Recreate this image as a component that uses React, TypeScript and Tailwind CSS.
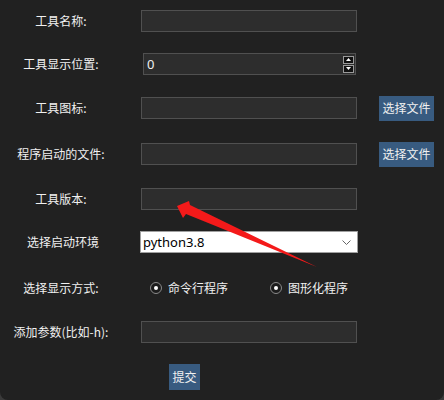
import React from "react";

const FONT = { fontFamily: '"Noto Sans CJK SC", "Noto Sans", sans-serif' };

function Label({ children }: { children: React.ReactNode }) {
  return <div className="w-[122px] shrink-0 text-center text-[12px] leading-none text-[#f0f0f0]">{children}</div>;
}

function TextBox() {
  return <div className="ml-[19px] h-[22px] w-[216px] border border-[#505050] bg-[#2d2d2d]" />;
}

function FileButton() {
  return (
    <button className="ml-[22px] h-[25px] w-[55px] bg-[#385b80] text-[12px] text-[#f0f0f0]">
      选择文件
    </button>
  );
}

function Radio({ label }: { label: string }) {
  return (
    <label className="flex items-center gap-[6px] text-[12px] text-[#f0f0f0]">
      <span className="flex h-[12px] w-[12px] items-center justify-center rounded-full border border-[#8a8a8a] bg-[#1c1c1c]">
        <span className="h-[4px] w-[4px] rounded-full bg-white" />
      </span>
      {label}
    </label>
  );
}

export default function App() {
  return (
    <div className="h-[400px] w-[444px] bg-[#3a3a3a]" style={FONT}>
      <div className="relative flex h-full w-full flex-col rounded-b-[8px] bg-[#212121] pt-[10px]">
        {/* 工具名称 */}
        <div className="flex h-[22px] items-center">
          <Label>工具名称:</Label>
          <TextBox />
        </div>

        {/* 显示位置 - spinbox */}
        <div className="mt-[21px] flex h-[22px] items-center">
          <Label>工具显示位置:</Label>
          <div className="ml-[21px] flex h-[22px] w-[213px] items-center justify-between border border-[#505050] bg-[#2d2d2d] pl-[3px] pr-[1px]">
            <span className="text-[13px] leading-none text-[#f0f0f0]" style={{ fontFamily: '"Noto Sans", sans-serif' }}>0</span>
            <div className="flex flex-col gap-[1px]">
              <div className="flex h-[8px] w-[11px] items-center justify-center border border-[#9a9a9a] bg-[#111]">
                <svg width="5" height="3" viewBox="0 0 5 3"><path d="M2.5 0L5 3H0z" fill="#fff" /></svg>
              </div>
              <div className="flex h-[8px] w-[11px] items-center justify-center border border-[#9a9a9a] bg-[#111]">
                <svg width="5" height="3" viewBox="0 0 5 3"><path d="M0 0h5L2.5 3z" fill="#fff" /></svg>
              </div>
            </div>
          </div>
        </div>

        {/* 图标 */}
        <div className="mt-[22px] flex h-[22px] items-center">
          <Label>工具图标:</Label>
          <TextBox />
          <FileButton />
        </div>

        {/* 启动文件 */}
        <div className="mt-[24px] flex h-[22px] items-center">
          <Label>程序启动的文件:</Label>
          <TextBox />
          <FileButton />
        </div>

        {/* 版本 */}
        <div className="mt-[23px] flex h-[22px] items-center">
          <Label>工具版本:</Label>
          <TextBox />
        </div>

        {/* 启动环境 */}
        <div className="mt-[21px] flex h-[22px] items-center">
          <div className="w-[126px] shrink-0 text-center text-[12px] leading-none text-[#f0f0f0]">选择启动环境</div>
          <div className="ml-[14px] flex h-[22px] w-[218px] items-center justify-between border border-[#a0a0a0] bg-white pl-[2px] pr-[6px]">
            <span className="text-[13px] leading-none text-black" style={{ fontFamily: '"Noto Sans", sans-serif' }}>python3.8</span>
            <svg width="9" height="5" viewBox="0 0 9 5"><path d="M0.5 0.5L4.5 4.5L8.5 0.5" fill="none" stroke="#666" strokeWidth="1" /></svg>
          </div>
        </div>

        {/* 显示方式 */}
        <div className="mt-[24px] flex h-[22px] items-center">
          <Label>选择显示方式:</Label>
          <div className="ml-[28px] flex items-center gap-[42px]">
            <Radio label="命令行程序" />
            <Radio label="图形化程序" />
          </div>
        </div>

        {/* 参数 */}
        <div className="mt-[22px] flex h-[22px] items-center">
          <Label>添加参数(比如-h):</Label>
          <TextBox />
        </div>

        {/* 提交 */}
        <div className="mt-[21px] flex">
          <button className="ml-[169px] h-[26px] w-[31px] bg-[#385b80] text-[12px] text-[#f0f0f0]">提交</button>
        </div>

        {/* red annotation arrow */}
        <svg className="absolute left-0 top-0" width="444" height="400" viewBox="0 0 444 400">
          <polygon points="177,206 189,201 190,205 317,267 186,214 183,218" fill="#f41a1a" />
        </svg>
      </div>
    </div>
  );
}
